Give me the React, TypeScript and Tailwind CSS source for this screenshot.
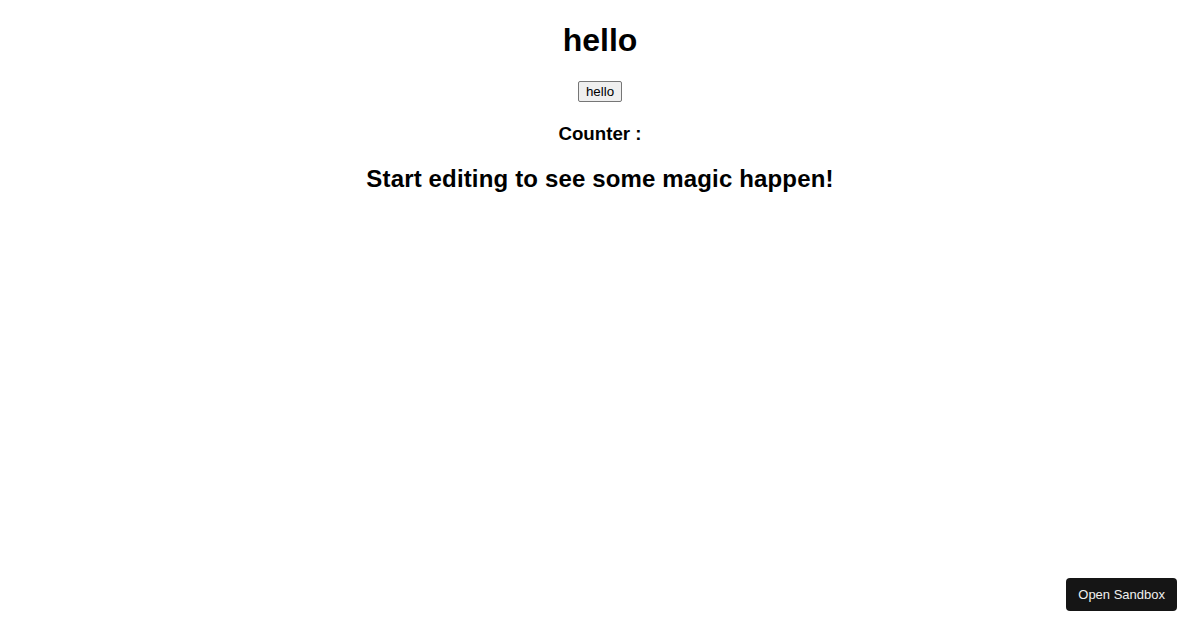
import React from "react";

export default function App() {
  return (
    <div className="min-h-[630px] bg-white text-black text-center" style={{ fontFamily: '"Liberation Sans", Arial, sans-serif' }}>
      <div className="pt-[22px]">
        <h1 className="text-[32px] font-bold leading-[37px]">hello</h1>
        <div className="mt-[20px]">
          <button className="text-[13.33px] leading-[15px] px-[6.5px] py-[2px] bg-[#efefef] border border-[#767676] rounded-[2px] text-black">
            hello
          </button>
        </div>
        <h3 className="mt-[20px] text-[18.72px] font-bold leading-[22px]">Counter :</h3>
        <h2 className="mt-[20px] text-[24px] font-bold leading-[28px] tracking-[0.15px]">Start editing to see some magic happen!</h2>
      </div>
      <div className="fixed right-[23px] bottom-[19px] bg-[#151515] text-[#f0f0f0] rounded-[4px] h-[33px] px-[12px] flex items-center text-[13px]" style={{ fontFamily: '"Liberation Sans", Arial, sans-serif' }}>
        Open Sandbox
      </div>
    </div>
  );
}
